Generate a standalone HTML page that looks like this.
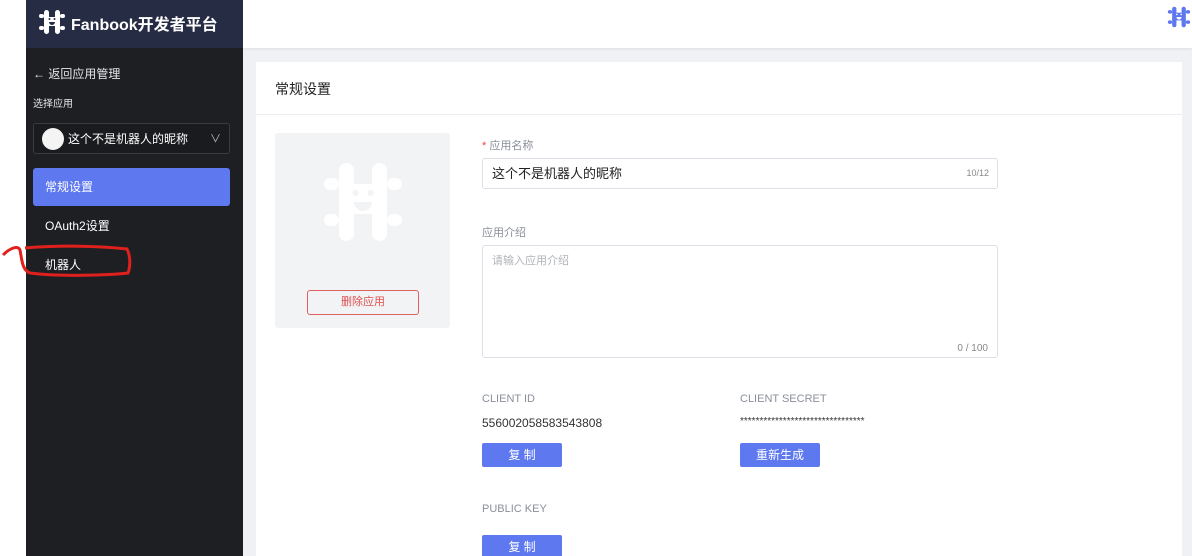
<!DOCTYPE html>
<html><head><meta charset="utf-8"><style>
*{box-sizing:border-box;margin:0;padding:0}
html,body{width:1192px;height:556px;overflow:hidden}
body{background:#f0f1f4;font-family:"Liberation Sans","Noto Sans CJK SC",sans-serif;position:relative}
.abs{position:absolute}
.side{left:26px;top:0;width:217px;height:556px;background:#1e1f23}
.shead{left:26px;top:0;width:217px;height:48px;background:#272c45}
.top{left:243px;top:0;width:949px;height:48px;background:#fff;box-shadow:0 1px 3px rgba(0,0,0,.08)}
.card{left:256px;top:62px;width:926px;height:494px;background:#fff}
.lbl{font-size:12px;color:#8a8f99}
.btn{background:#5e78f0;color:#fff;font-size:12px;text-align:center;line-height:24px;border-radius:2px;height:24px}
</style></head><body>
<div class="abs" style="left:0;top:0;width:26px;height:556px;background:#fff"></div>
<div class="abs side"></div>
<div class="abs shead"></div>
<svg class="abs" style="left:38px;top:8px" width="28" height="28" viewBox="0 0 28 28"><g fill="#fff"><rect x="6" y="2" width="5" height="24" rx="2.5"/><rect x="17" y="2" width="5" height="24" rx="2.5"/><rect x="8" y="9" width="12" height="9"/><rect x="1" y="6" width="5" height="4" rx="2"/><rect x="22" y="6" width="5" height="4" rx="2"/><rect x="1" y="18" width="5" height="4" rx="2"/><rect x="22" y="18" width="5" height="4" rx="2"/></g><circle cx="11.5" cy="11" r="1" fill="#272c45"/><circle cx="16.5" cy="11" r="1" fill="#272c45"/><path d="M11 14h6a3 3 0 0 1-6 0z" fill="#272c45"/></svg>
<div class="abs" style="left:71px;top:11px;color:#fff;font-size:16px;font-weight:bold">Fanbook开发者平台</div>
<div class="abs" style="left:33px;top:65px;color:#e6e6e6;font-size:12px">← 返回应用管理</div>
<div class="abs" style="left:33px;top:95px;color:#e6e6e6;font-size:10px">选择应用</div>
<div class="abs" style="left:33px;top:123px;width:197px;height:31px;border:1px solid #3a3b40;border-radius:3px;background:#1a1b1e"></div>
<div class="abs" style="left:42px;top:128px;width:22px;height:22px;border-radius:50%;background:#f4f4f4"></div>
<div class="abs" style="left:68px;top:130px;color:#fff;font-size:12px">这个不是机器人的昵称</div>
<div class="abs" style="left:210px;top:130px;color:#bbb;font-size:11px">∨</div>
<div class="abs" style="left:33px;top:168px;width:197px;height:38px;background:#5e78ef;border-radius:3px;color:#fff;font-size:12px;line-height:38px;padding-left:12px">常规设置</div>
<div class="abs" style="left:45px;top:217px;color:#fff;font-size:12px">OAuth2设置</div>
<div class="abs" style="left:45px;top:256px;color:#fff;font-size:12px">机器人</div>
<svg class="abs" style="left:0;top:240px" width="140" height="40"><path d="M3 15 C10 8 18 5 20 10 C22 20 22 30 30 33 C60 37 110 35 128 33 C131 25 130 15 127 9 C100 6 60 5 25 8" fill="none" stroke="#e0201c" stroke-width="3"/></svg>
<div class="abs top"></div>
<svg class="abs" style="left:1167px;top:5px" width="24" height="24" viewBox="0 0 28 28"><g fill="#5e78f0"><rect x="6" y="2" width="5" height="24" rx="2.5"/><rect x="17" y="2" width="5" height="24" rx="2.5"/><rect x="8" y="9" width="12" height="9"/><rect x="1" y="6" width="5" height="4" rx="2"/><rect x="22" y="6" width="5" height="4" rx="2"/><rect x="1" y="18" width="5" height="4" rx="2"/><rect x="22" y="18" width="5" height="4" rx="2"/></g><circle cx="11.5" cy="11" r="1" fill="#fff"/><circle cx="16.5" cy="11" r="1" fill="#fff"/><path d="M11 14h6a3 3 0 0 1-6 0z" fill="#fff"/></svg>
<div class="abs card"></div>
<div class="abs" style="left:256px;top:114px;width:926px;height:1px;background:#ebedf0"></div>
<div class="abs" style="left:275px;top:79px;font-size:14px;color:#222">常规设置</div>
<div class="abs" style="left:275px;top:133px;width:175px;height:195px;background:#f2f3f5;border-radius:3px"></div>
<svg class="abs" style="left:321px;top:160px" width="84" height="84" viewBox="0 0 28 28"><g fill="#fff"><rect x="6" y="1" width="5" height="26" rx="2.5"/><rect x="17" y="1" width="5" height="26" rx="2.5"/><rect x="8" y="8" width="12" height="10"/><rect x="1" y="6" width="5" height="4" rx="2"/><rect x="22" y="6" width="5" height="4" rx="2"/><rect x="1" y="18" width="5" height="4" rx="2"/><rect x="22" y="18" width="5" height="4" rx="2"/></g><circle cx="11.5" cy="11" r="1" fill="#f2f3f5"/><circle cx="16.5" cy="11" r="1" fill="#f2f3f5"/><path d="M11 14h6a3 3 0 0 1-6 0z" fill="#f2f3f5"/></svg>
<div class="abs" style="left:307px;top:290px;width:112px;height:25px;border:1px solid #e06060;border-radius:3px;color:#e05050;font-size:11px;text-align:center;line-height:23px">删除应用</div>
<div class="abs lbl" style="left:482px;top:137px;font-size:11px"><span style="color:#e44">*</span> 应用名称</div>
<div class="abs" style="left:482px;top:158px;width:516px;height:31px;border:1px solid #dcdfe6;border-radius:3px;font-size:13px;color:#222;line-height:29px;padding-left:9px">这个不是机器人的昵称<span style="position:absolute;right:8px;font-size:9px;color:#888">10/12</span></div>
<div class="abs lbl" style="left:482px;top:224px;font-size:11px">应用介绍</div>
<div class="abs" style="left:482px;top:245px;width:516px;height:113px;border:1px solid #dcdfe6;border-radius:3px;font-size:11px;color:#b0b3b8;padding:6px 9px">请输入应用介绍<span style="position:absolute;right:9px;bottom:3px;color:#888;font-size:10px">0 / 100</span></div>
<div class="abs lbl" style="left:482px;top:393px;font-size:11px">CLIENT ID</div>
<div class="abs" style="left:482px;top:416px;font-size:12px;color:#333">556002058583543808</div>
<div class="abs btn" style="left:482px;top:443px;width:80px">复 制</div>
<div class="abs lbl" style="left:740px;top:393px;font-size:11px">CLIENT SECRET</div>
<div class="abs" style="left:740px;top:416px;font-size:10px;color:#333">********************************</div>
<div class="abs btn" style="left:740px;top:443px;width:80px">重新生成</div>
<div class="abs lbl" style="left:482px;top:503px;font-size:11px">PUBLIC KEY</div>
<div class="abs btn" style="left:482px;top:535px;width:80px">复 制</div>
</body></html>
